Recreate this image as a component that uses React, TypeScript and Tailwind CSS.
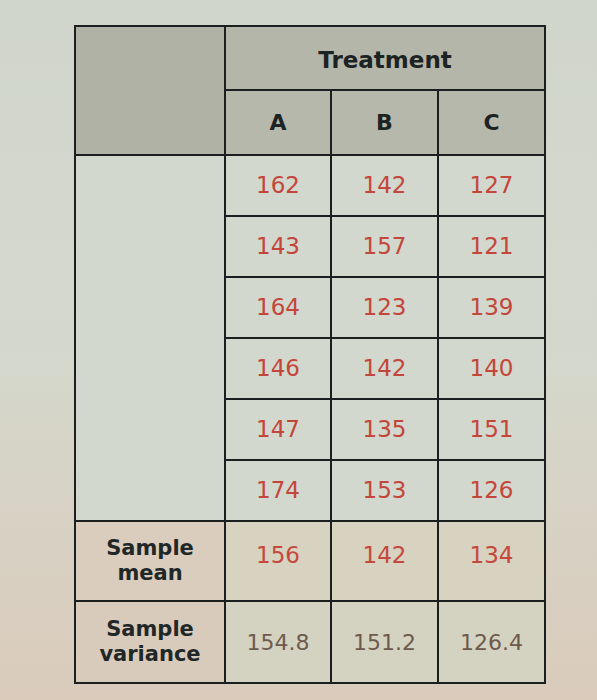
import React from 'react';

const rows = [
  ['162', '142', '127'],
  ['143', '157', '121'],
  ['164', '123', '139'],
  ['146', '142', '140'],
  ['147', '135', '151'],
  ['174', '153', '126'],
];

const cell = 'border-2 border-[#1c1f1f] text-center align-middle';

export default function App() {
  return (
    <div className="w-[597px] h-[700px] overflow-hidden bg-linear-to-b from-[#d1d6cd] via-[#d4d8cc] to-[#dacbbb] pt-[25px] pl-[74px] font-['DejaVu_Sans',sans-serif]">
      <table className="border-collapse w-[470px] table-fixed">
        <colgroup>
          <col className="w-[150px]" />
          <col className="w-[106px]" />
          <col className="w-[107px]" />
          <col className="w-[107px]" />
        </colgroup>
        <tbody>
          <tr className="h-[64px]">
            <td rowSpan={2} className={`${cell} bg-[#b0b2a6]`}></td>
            <td colSpan={3} className={`${cell} bg-[#b4b6aa] text-[23px] font-bold text-[#1c2323] pt-1`}>
              Treatment
            </td>
          </tr>
          <tr className="h-[65px]">
            {['A', 'B', 'C'].map((h) => (
              <td key={h} className={`${cell} bg-[#b6b8ac] text-[22px] font-bold text-[#1c2323]`}>
                {h}
              </td>
            ))}
          </tr>
          {rows.map((r, i) => (
            <tr key={i} className="h-[61px]">
              {i === 0 && <td rowSpan={6} className={`${cell} bg-[#d3d8ce]`}></td>}
              {r.map((v, j) => (
                <td key={j} className={`${cell} bg-[#d2d8cd] text-[23px] text-[#c4453a]`}>
                  {v}
                </td>
              ))}
            </tr>
          ))}
          <tr className="h-[80px]">
            <td className={`${cell} bg-[#dacdbe] text-[21px] font-bold leading-[25px] text-[#1f2727]`}>
              Sample<br />mean
            </td>
            {['156', '142', '134'].map((v, j) => (
              <td key={j} className={`${cell} bg-[#d8d2c0] text-[23px] text-[#c4493c] pb-3`}>
                {v}
              </td>
            ))}
          </tr>
          <tr className="h-[82px]">
            <td className={`${cell} bg-[#d9cbbb] text-[21px] font-bold leading-[25px] text-[#1f2727]`}>
              Sample<br />variance
            </td>
            {['154.8', '151.2', '126.4'].map((v, j) => (
              <td key={j} className={`${cell} bg-[#d4d3c2] text-[22px] text-[#6e5a4c]`}>
                {v}
              </td>
            ))}
          </tr>
        </tbody>
      </table>
    </div>
  );
}
